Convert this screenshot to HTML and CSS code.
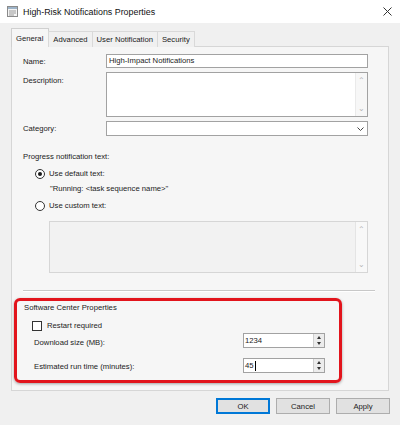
FILE: index.html
```html
<!DOCTYPE html>
<html lang="en">
<head>
    <meta charset="UTF-8">
    <meta name="viewport" content="width=device-width, initial-scale=1.0">
    <title>High-Risk Notifications Properties</title>
    <link rel="stylesheet" href="styles.css">
</head>
<body>
    <div class="window">
        <div class="titlebar">
            <svg class="app-icon" width="11" height="11" viewBox="0 0 11 11">
                <rect x="0.5" y="0.5" width="10" height="10" fill="#f4f4f4" stroke="#8a8a8a"/>
                <rect x="1" y="1" width="9" height="2" fill="#9db3c8"/>
                <line x1="2" y1="5" x2="9" y2="5" stroke="#9a9a9a"/>
                <line x1="2" y1="7" x2="9" y2="7" stroke="#9a9a9a"/>
                <line x1="2" y1="9" x2="7" y2="9" stroke="#9a9a9a"/>
            </svg>
            <span class="title">High-Risk Notifications Properties</span>
            <svg class="close-icon" width="9" height="9" viewBox="0 0 9 9">
                <path d="M0.5 0.5 L8.5 8.5 M8.5 0.5 L0.5 8.5" stroke="#333" stroke-width="1"/>
            </svg>
        </div>

        <div class="dialog">
            <div class="tabs">
                <div class="tab active">General</div>
                <div class="tab">Advanced</div>
                <div class="tab">User Notification</div>
                <div class="tab">Security</div>
            </div>

            <div class="page">
                <div class="form-grid">
                    <div class="label">Name:</div>
                    <div class="field name-field">High-Impact Notifications</div>

                    <div class="label label-top">Description:</div>
                    <div class="field textarea">
                        <div class="scrollbar">
                            <span class="arrow">&#8963;</span>
                            <span class="arrow down">&#8964;</span>
                        </div>
                    </div>

                    <div class="label">Category:</div>
                    <div class="field select">
                        <svg class="chevron" width="7" height="4" viewBox="0 0 7 4">
                            <path d="M0.5 0.5 L3.5 3.5 L6.5 0.5" fill="none" stroke="#444"/>
                        </svg>
                    </div>
                </div>

                <div class="group-label">Progress notification text:</div>
                <div class="radio-row">
                    <span class="radio checked"></span>
                    <span>Use default text:</span>
                </div>
                <div class="default-text">"Running: &lt;task sequence name&gt;"</div>
                <div class="radio-row">
                    <span class="radio"></span>
                    <span>Use custom text:</span>
                </div>
                <div class="field textarea custom-text">
                    <div class="scrollbar">
                        <span class="arrow">&#8963;</span>
                        <span class="arrow down">&#8964;</span>
                    </div>
                </div>

                <div class="separator"></div>

                <div class="sc-section">
                    <div class="sc-title">Software Center Properties</div>
                    <div class="check-row">
                        <span class="checkbox"></span>
                        <span>Restart required</span>
                    </div>
                    <div class="spin-row">
                        <span class="spin-label">Download size (MB):</span>
                        <div class="spin">
                            <span class="spin-value">1234</span>
                            <div class="spin-btns">
                                <span class="tri up"></span>
                                <span class="tri down"></span>
                            </div>
                        </div>
                    </div>
                    <div class="spin-row">
                        <span class="spin-label">Estimated run time (minutes):</span>
                        <div class="spin">
                            <span class="spin-value">45<span class="caret"></span></span>
                            <div class="spin-btns">
                                <span class="tri up"></span>
                                <span class="tri down"></span>
                            </div>
                        </div>
                    </div>
                    <div class="highlight"></div>
                </div>
            </div>

            <div class="buttons">
                <button class="btn btn-default">OK</button>
                <button class="btn">Cancel</button>
                <button class="btn">Apply</button>
            </div>
        </div>
    </div>
</body>
</html>
```

FILE: styles.css
```css
body {
    margin: 0;
    font-family: 'Liberation Sans', Arial, sans-serif;
    font-size: 7.7px;
    color: #1b1b1b;
    background: #f0f0f0;
}
.window {
    width: 400px;
    height: 425px;
    background: #f0f0f0;
    overflow: hidden;
}
.titlebar {
    height: 23px;
    background: #fff;
    display: flex;
    align-items: center;
    padding: 0 8px 0 7px;
}
.app-icon {
    margin-right: 5px;
}
.title {
    font-size: 8.9px;
    color: #111;
    flex: 1;
}
.dialog {
    padding: 6px 10px 0 11px;
}
.tabs {
    display: flex;
    align-items: flex-end;
    height: 18px;
    position: relative;
    z-index: 1;
}
.tab {
    height: 15px;
    line-height: 16px;
    padding: 0 4px;
    border: 1px solid #d9d9d9;
    border-bottom: none;
    margin-left: -1px;
    background: #f0f0f0;
}
.tab.active {
    height: 18px;
    line-height: 20px;
    margin-left: 0;
    background: #f6f6f6;
    border-color: #d0d0d0;
    padding: 0 5px 0 4px;
}
.page {
    background: #f6f6f6;
    border: 1px solid #d6d6d6;
    margin-top: -1px;
    padding: 7px 20px 17px 11px;
    box-sizing: border-box;
    width: 378px;
}
.form-grid {
    display: grid;
    grid-template-columns: 83px 1fr;
    grid-template-rows: 14px 45px 15px;
    row-gap: 4px;
    align-items: center;
}
.label-top {
    align-self: start;
    padding-top: 4px;
}
.field {
    background: #fff;
    border: 1px solid #a2a2a2;
    box-sizing: border-box;
    height: 100%;
    position: relative;
}
.name-field {
    padding-left: 2px;
    line-height: 12px;
}
.textarea .scrollbar {
    position: absolute;
    right: 0;
    top: 0;
    bottom: 0;
    width: 12px;
    background: #f7f7f7;
    border-left: 1px solid #eaeaea;
    display: flex;
    flex-direction: column;
    justify-content: space-between;
    align-items: center;
    color: #b5b5b5;
    font-size: 8px;
    line-height: 9px;
    padding: 3px 0;
    box-sizing: border-box;
}
.select .chevron {
    position: absolute;
    right: 3px;
    top: 5px;
}
.group-label {
    margin-top: 15px;
    line-height: 12px;
}
.radio-row {
    display: flex;
    align-items: center;
    gap: 4px;
    margin-top: 5px;
    margin-left: 12px;
    line-height: 12px;
}
.radio {
    width: 10px;
    height: 10px;
    border: 1px solid #333;
    border-radius: 50%;
    box-sizing: border-box;
    background: #fff;
    position: relative;
}
.radio.checked::after {
    content: '';
    position: absolute;
    left: 2px;
    top: 2px;
    width: 4px;
    height: 4px;
    border-radius: 50%;
    background: #1b1b1b;
}
.default-text {
    margin: 3px 0 0 27px;
    line-height: 12px;
}
.custom-text {
    margin: 9px 0 0 26px;
    height: 52px;
    background: #f2f2f2;
    border-color: #d6d6d6;
}
.custom-text .scrollbar {
    background: #f8f8f8;
    border-left-color: #e4e4e4;
}
.separator {
    margin: 17px -7px 0 0;
    border-top: 1px solid #c8c8c8;
    border-bottom: 1px solid #fff;
}
.sc-section {
    position: relative;
    margin-top: 10px;
    margin-left: 1px;
}
.sc-title {
    line-height: 12px;
}
.check-row {
    display: flex;
    align-items: center;
    gap: 5px;
    margin: 6px 0 0 8px;
    line-height: 12px;
}
.checkbox {
    width: 10px;
    height: 10px;
    border: 1px solid #333;
    box-sizing: border-box;
    background: #fff;
}
.spin-row {
    display: grid;
    grid-template-columns: 209px 82px;
    align-items: center;
    margin-left: 10px;
    margin-top: 1px;
}
.spin-row + .spin-row {
    margin-top: 10px;
}
.spin-label {
    padding-top: 4px;
}
.spin-row + .spin-row .spin-label {
    padding-top: 1px;
}
.spin {
    height: 15px;
    background: #fff;
    border: 1px solid #a2a2a2;
    box-sizing: border-box;
    display: flex;
    align-items: center;
}
.spin-value {
    flex: 1;
    padding-left: 1px;
    display: flex;
    align-items: center;
}
.caret {
    display: inline-block;
    width: 1px;
    height: 10px;
    background: #000;
    margin-left: 1px;
}
.spin-btns {
    width: 11px;
    height: 100%;
    background: #ececec;
    border-left: 1px solid #cfcfcf;
    display: flex;
    flex-direction: column;
    justify-content: space-around;
    align-items: center;
    padding: 1px 0;
    box-sizing: border-box;
}
.tri {
    width: 0;
    height: 0;
    border-left: 2.5px solid transparent;
    border-right: 2.5px solid transparent;
}
.tri.up {
    border-bottom: 3px solid #333;
}
.tri.down {
    border-top: 3px solid #333;
}
.highlight {
    position: absolute;
    top: -4px;
    left: -10px;
    width: 328px;
    bottom: -10px;
    border: 3px solid #e2141c;
    border-radius: 6px;
    box-sizing: border-box;
    box-shadow: 0 1px 3px rgba(0,0,0,0.35);
    pointer-events: none;
}
.buttons {
    display: flex;
    justify-content: flex-end;
    gap: 6px;
    margin-top: 7px;
}
.btn {
    width: 54px;
    height: 16px;
    padding: 0;
    font-family: inherit;
    font-size: 7.7px;
    color: #1b1b1b;
    background: #e1e1e1;
    border: 1px solid #adadad;
}
.btn-default {
    border: 1px solid #0078d7;
    box-shadow: inset 0 0 0 1px #0078d7;
}
```
